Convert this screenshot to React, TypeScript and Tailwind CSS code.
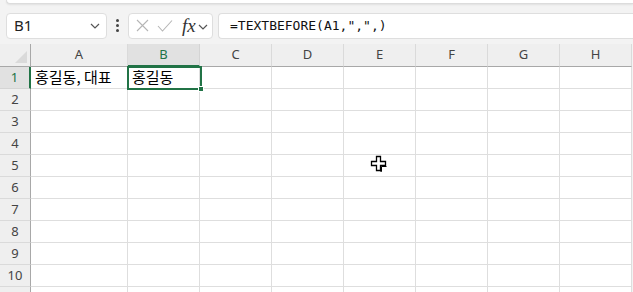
import React from "react";

const cols = ["A", "B", "C", "D", "E", "F", "G", "H"];
const rows = [1, 2, 3, 4, 5, 6, 7, 8, 9, 10, 11];

function Chevron() {
  return (
    <svg width="10" height="6" viewBox="0 0 10 6" fill="none">
      <path d="M1 1l4 4 4-4" stroke="#555" strokeWidth="1.2" />
    </svg>
  );
}

export default function App() {
  return (
    <div
      className="relative w-[633px] h-[292px] overflow-hidden bg-[#f3f3f3]"
      style={{ fontFamily: '"Noto Sans", "Liberation Sans", sans-serif' }}
    >
      {/* ribbon edge */}
      <div className="ml-[6px] h-[4px] bg-white rounded-bl-[6px] border-b border-l border-[#dcdcdc] shadow-[0_1px_2px_rgba(0,0,0,0.08)]" />

      {/* formula bar */}
      <div className="flex items-center h-[40px] pt-[3px] pl-[6px]">
        <div className="flex items-center justify-between w-[101px] h-[26px] bg-white border border-[#dedede] rounded-[4px] pl-[7px] pr-[6px]">
          <span className="text-[15px] text-[#222]">B1</span>
          <Chevron />
        </div>
        <div className="w-[21px] flex flex-col items-center gap-[2px]">
          <div className="w-[3px] h-[3px] rounded-full bg-[#444]" />
          <div className="w-[3px] h-[3px] rounded-full bg-[#444]" />
          <div className="w-[3px] h-[3px] rounded-full bg-[#444]" />
        </div>
        <div className="flex items-center w-[85px] h-[26px] bg-white border border-[#dedede] rounded-[4px] pl-[6px]">
          <svg width="15" height="15" viewBox="0 0 15 15" fill="none">
            <path d="M2 2l11 11M13 2L2 13" stroke="#b5b5b5" strokeWidth="1.1" />
          </svg>
          <svg width="16" height="14" viewBox="0 0 16 14" className="ml-[7px]" fill="none">
            <path d="M1 7l4.5 5L15 1.5" stroke="#b5b5b5" strokeWidth="1.1" />
          </svg>
          <span
            className="ml-[9px] italic text-[19px] text-[#333] leading-none"
            style={{ fontFamily: '"Liberation Serif", serif' }}
          >
            fx
          </span>
          <span className="ml-[2px] mt-[2px]">
            <Chevron />
          </span>
        </div>
        <div className="flex items-center flex-1 h-[26px] ml-[5px] bg-white border border-[#dedede] border-r-0 rounded-l-[4px] pl-[11px]">
          <span
            className="text-[13px] text-[#111]"
            style={{ fontFamily: '"DejaVu Sans Mono", monospace' }}
          >
            =TEXTBEFORE(A1,",",)
          </span>
        </div>
      </div>

      {/* grid */}
      <div className="grid grid-cols-[31px_97px_72px_72px_72px_72px_72px_72px_72px] grid-rows-[23px_repeat(11,22px)]">
        {/* header row */}
        <div className="relative bg-[#efefef] border-r border-b border-[#a8a8a8]">
          <svg className="absolute right-[3px] bottom-[3px]" width="12" height="12" viewBox="0 0 12 12">
            <path d="M12 0V12H0z" fill="#dadada" />
          </svg>
        </div>
        {cols.map((c) => (
          <div
            key={c}
            className={
              c === "B"
                ? "flex items-center justify-center bg-[#e1e1e1] border-r border-[#d4d4d4] border-b-2 border-b-[#217346] text-[13px] text-[#217346]"
                : "flex items-center justify-center bg-[#efefef] border-r border-[#dadada] border-b border-b-[#a8a8a8] text-[13px] text-[#444]"
            }
          >
            {c}
          </div>
        ))}

        {rows.map((r) => (
          <React.Fragment key={r}>
            <div
              className={
                r === 1
                  ? "flex items-center justify-center bg-[#e1e1e1] border-b border-[#d4d4d4] border-r-2 border-r-[#217346] text-[13px] text-[#217346]"
                  : "flex items-center justify-center bg-[#efefef] border-b border-[#dadada] border-r border-r-[#a8a8a8] text-[13px] text-[#444]"
              }
            >
              {r < 11 ? r : ""}
            </div>
            {cols.map((c) => (
              <div
                key={c}
                className="flex items-center bg-white border-r border-b border-[#dedede] pl-[4px] text-[15px] text-black whitespace-nowrap"
                style={{ fontFamily: '"Noto Sans CJK KR", "Noto Sans", sans-serif' }}
              >
                {r === 1 && c === "A" ? "홍길동, 대표" : r === 1 && c === "B" ? "홍길동" : ""}
              </div>
            ))}
          </React.Fragment>
        ))}
      </div>

      {/* selection */}
      <div className="absolute left-[127px] top-[66px] w-[75px] h-[24px] border-2 border-[#217346]">
        <div className="absolute right-[-4px] bottom-[-4px] w-[6px] h-[6px] bg-[#217346] border border-white" />
      </div>

      {/* cursor */}
      <svg className="absolute left-[370px] top-[155px]" width="18" height="18" viewBox="0 0 18 18">
        <path
          d="M6.5 1.5h4v5h5v4h-5v5h-4v-5h-5v-4h5z"
          fill="white"
          stroke="black"
          strokeWidth="1.3"
        />
        <path d="M10.5 16.5h1v-5h5" stroke="black" strokeWidth="1" fill="none" />
      </svg>
    </div>
  );
}
